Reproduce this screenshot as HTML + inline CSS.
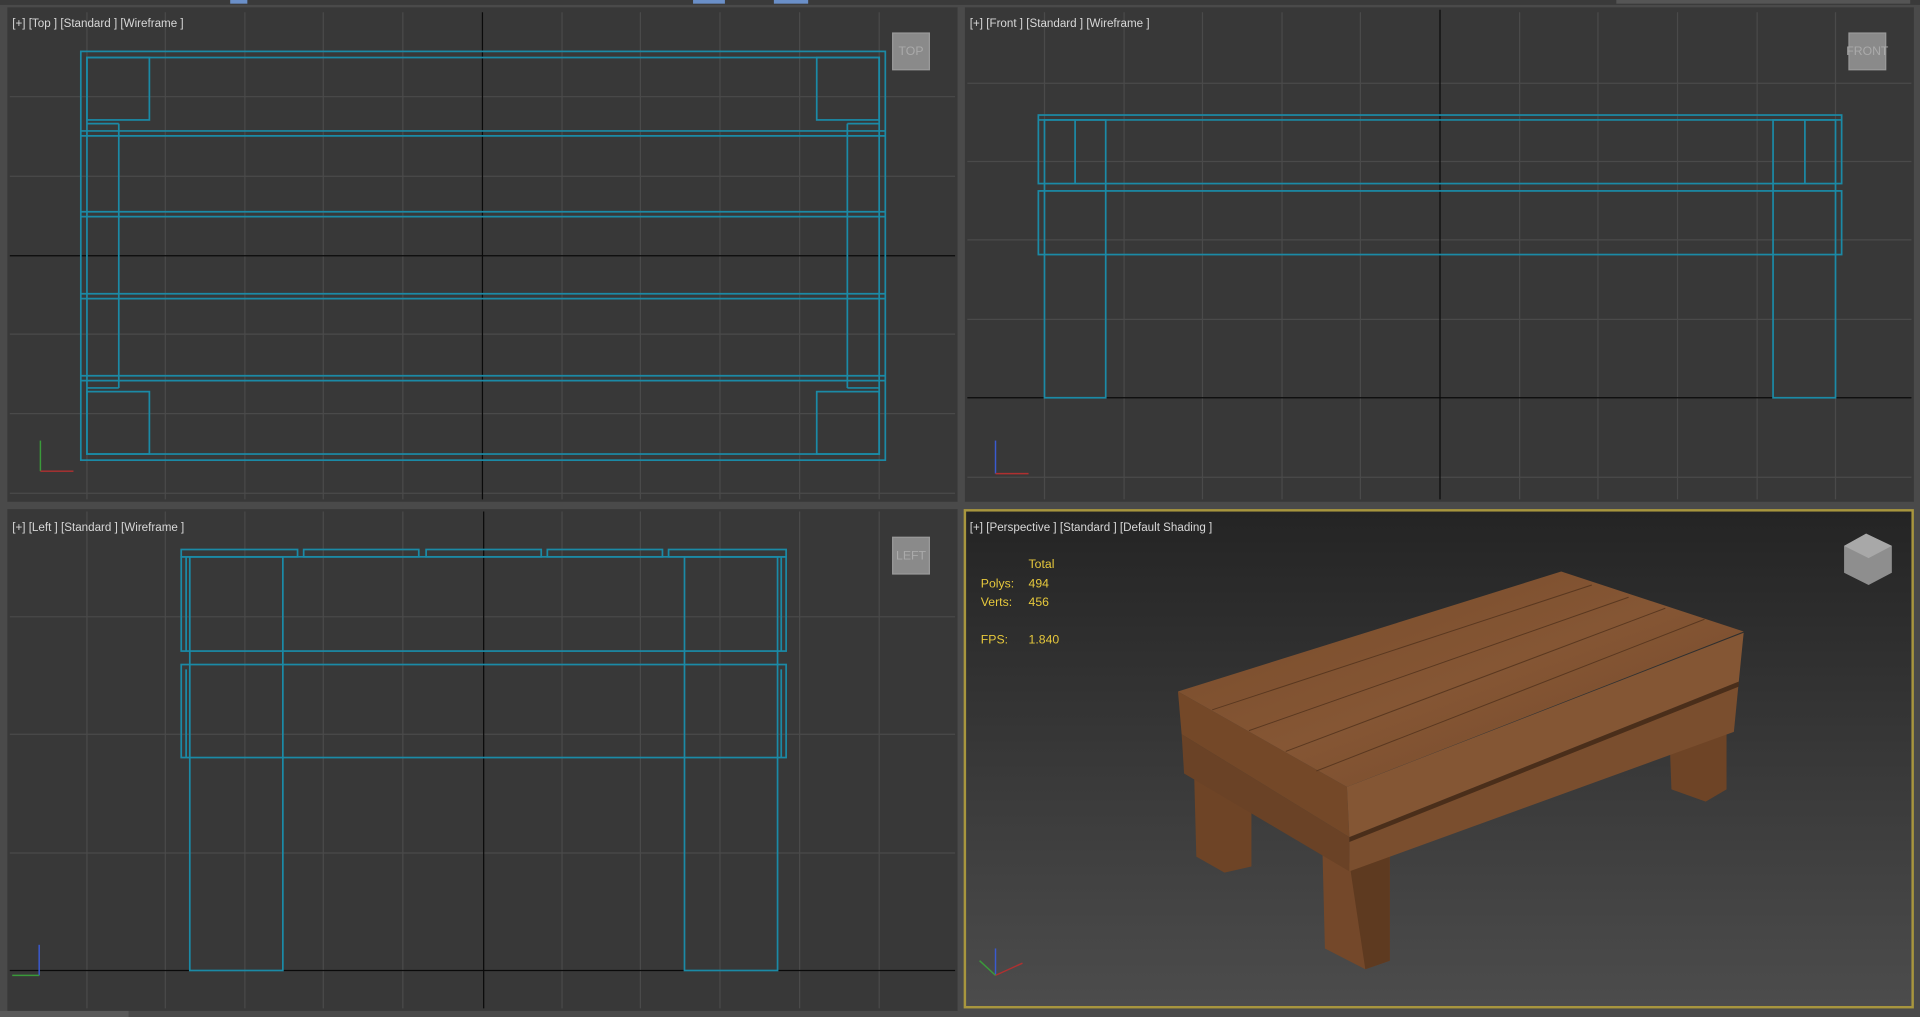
<!DOCTYPE html>
<html><head><meta charset="utf-8"><style>
html,body{margin:0;padding:0;background:#444;overflow:hidden}
svg{display:block}
text{font-family:"Liberation Sans",sans-serif;font-size:10px}
</style></head><body>
<svg width="1920" height="1017" viewBox="0 0 1568 831" preserveAspectRatio="none" xmlns="http://www.w3.org/2000/svg">
<defs>
<linearGradient id="pg" x1="0" y1="0" x2="0" y2="1"><stop offset="0" stop-color="#242424"/><stop offset="1" stop-color="#4c4c4c"/></linearGradient>
<linearGradient id="wt" x1="0" y1="0" x2="1" y2="1"><stop offset="0" stop-color="#764a2a"/><stop offset="0.5" stop-color="#855634"/><stop offset="1" stop-color="#74482a"/></linearGradient>
</defs>
<rect width="1568" height="831" fill="#4a4a4a"/>
<rect x="0" y="0" width="1568" height="4" fill="#3a3a3a"/>
<rect x="1320" y="0" width="240" height="3" fill="#555"/>
<rect x="188" y="0" width="14" height="3" fill="#6a8fc8"/>
<rect x="566" y="0" width="26" height="3" fill="#6a8fc8"/>
<rect x="632" y="0" width="28" height="3" fill="#6a8fc8"/>
<rect x="6" y="6" width="776" height="404" fill="#383838"/>
<rect x="788" y="6" width="775" height="404" fill="#383838"/>
<rect x="6" y="416" width="776" height="410" fill="#383838"/>
<rect x="788" y="417" width="774" height="406" fill="url(#pg)" stroke="#a8963e" stroke-width="2"/>
<rect x="0" y="826" width="105" height="5" fill="#5a5a5a"/>
<g stroke="#4a4a4a" stroke-width="1">
<path d="M71 10V408M135 10V408M200 10V408M264 10V408M329 10V408M459 10V408M523 10V408M588 10V408M653 10V408M718 10V408M8 79H780M8 144H780M8 273H780M8 338H780M8 403H780"/>
<path d="M853 10V408M918 10V408M982 10V408M1047 10V408M1111 10V408M1241 10V408M1305 10V408M1370 10V408M1435 10V408M1499 10V408M790 68H1561M790 132H1561M790 196H1561M790 261H1561M790 390H1561"/>
<path d="M71 418V824M135 418V824M200 418V824M264 418V824M329 418V824M459 418V824M523 418V824M588 418V824M653 418V824M718 418V824M8 504H780M8 600H780M8 697H780"/>
</g>
<g stroke="#0a0a0a" stroke-width="1">
<path d="M394 10V408M8 209H780M1176 8V408M790 325H1561M395 418V824M8 793H780"/>
</g>
<g fill="none" stroke="#1b8aa6" stroke-width="1.4">
<rect x="66" y="42" width="657" height="334"/>
<rect x="71" y="47" width="647" height="324"/>
<rect x="71" y="47" width="51" height="51"/><rect x="667" y="47" width="51" height="51"/>
<rect x="71" y="320" width="51" height="51"/><rect x="667" y="320" width="51" height="51"/>
<path d="M66 107H723M66 111H723M66 173H723M66 177H723M66 240H723M66 244H723M66 307H723M66 311H723M97 101V317M692 101V317M71 101H97M692 101H718M71 317H97M692 317H718"/>
<rect x="848" y="94" width="656" height="56"/>
<path d="M848 98H1504M878 98V150M1474 98V150"/>
<rect x="848" y="156" width="656" height="52"/>
<rect x="853" y="98" width="50" height="227"/>
<rect x="1448" y="98" width="51" height="227"/>
<rect x="148" y="449" width="95" height="6"/><rect x="248" y="449" width="94" height="6"/><rect x="348" y="449" width="94" height="6"/><rect x="447" y="449" width="94" height="6"/><rect x="546" y="449" width="96" height="6"/>
<rect x="148" y="455" width="494" height="77"/>
<path d="M152 455V532M638 455V532M152 547V619M638 547V619"/>
<rect x="148" y="543" width="494" height="76"/>
<rect x="155" y="455" width="76" height="338"/>
<rect x="559" y="455" width="76" height="338"/>
</g>
<rect x="729" y="27" width="30" height="30" fill="#8a8a8a" stroke="#9a9a9a"/><text x="744" y="45" fill="#aaa" font-size="7" text-anchor="middle">TOP</text>
<rect x="1510" y="27" width="30" height="30" fill="#8a8a8a" stroke="#9a9a9a"/><text x="1525" y="45" fill="#aaa" font-size="6" text-anchor="middle">FRONT</text>
<rect x="729" y="439" width="30" height="30" fill="#8a8a8a" stroke="#9a9a9a"/><text x="744" y="457" fill="#aaa" font-size="7" text-anchor="middle">LEFT</text>
<path d="M1506 446L1524 436L1545 446L1545 468L1526 478L1506 468Z" fill="#8e8e8e"/><path d="M1506 446L1524 436L1545 446L1526 456Z" fill="#a8a8a8"/>
<g stroke-width="1.2" fill="none">
<path d="M33 385V360" stroke="#3a9a3a"/><path d="M33 385H60" stroke="#b03030"/>
<path d="M813 387V360" stroke="#3a5ad0"/><path d="M813 387H840" stroke="#b03030"/>
<path d="M32 797V772" stroke="#3a5ad0"/><path d="M32 797H10" stroke="#3a9a3a"/>
<path d="M813 797V775" stroke="#3a5ad0"/><path d="M813 797L835 787" stroke="#b03030"/><path d="M813 797L800 785" stroke="#3a9a3a"/>
</g>
<g fill="#d8d8d8" textLength="0">
<text x="10" y="22" transform="translate(10 0) scale(0.95 1) translate(-10 0)">[+] [Top ] [Standard ] [Wireframe ]</text>
<text x="792" y="22" transform="translate(792 0) scale(0.95 1) translate(-792 0)">[+] [Front ] [Standard ] [Wireframe ]</text>
<text x="10" y="434" transform="translate(10 0) scale(0.95 1) translate(-10 0)">[+] [Left ] [Standard ] [Wireframe ]</text>
<text x="792" y="434" transform="translate(792 0) scale(0.95 1) translate(-792 0)">[+] [Perspective ] [Standard ] [Default Shading ]</text>
</g>
<g fill="#e6c83c">
<text x="840" y="464">Total</text>
<text x="801" y="480">Polys:</text><text x="840" y="480">494</text>
<text x="801" y="495">Verts:</text><text x="840" y="495">456</text>
<text x="801" y="526">FPS:</text><text x="840" y="526">1.840</text>
</g>
<path d="M975 625L1022 640L1022 708L1000 713L977 700Z" fill="#6e4426"/>
<path d="M1363 590L1410 580L1410 645L1393 655L1365 645Z" fill="#6e4426"/>
<path d="M1080 695L1102 705L1135 700L1135 785L1115 792L1082 775Z" fill="#74482a"/>
<path d="M1102 705L1135 700L1135 785L1115 792Z" fill="#5e3a20"/>
<path d="M965 600L1102 684L1102 712L967 632Z" fill="#6a4226"/>
<path d="M1102 684L1420 557L1416 598L1102 712Z" fill="#7a4e2e"/>
<path d="M962 565L1100 643L1102 684L965 600Z" fill="#744828"/>
<path d="M1100 643L1424 517L1420 557L1102 684Z" fill="#845634"/>
<path d="M1102 684L1420 557L1420 561L1102 688Z" fill="#4a2e1a"/>
<path d="M962 565L1275 467L1424 516L1100 643Z" fill="url(#wt)"/>
<g stroke="#5a3820" stroke-width="0.8" fill="none">
<path d="M990 580L1300 478M1020 597L1330 488M1050 614L1360 497M1075 630L1392 506"/>
</g>
</svg>
</body></html>
